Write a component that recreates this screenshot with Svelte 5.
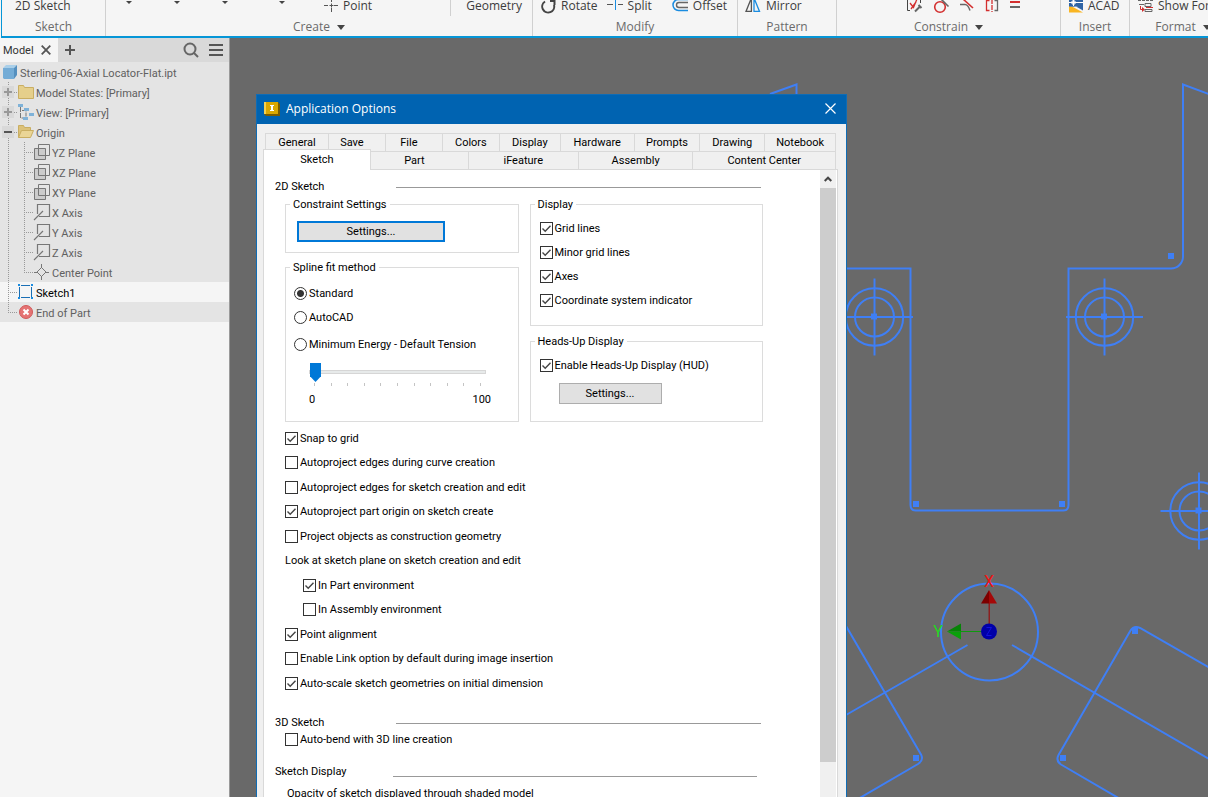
<script>
  const planes = ['YZ Plane', 'XZ Plane', 'XY Plane'];
  const axes = ['X Axis', 'Y Axis', 'Z Axis'];
  const tree = [
    { label: 'Model States: [Primary]', icon: 'folder', level: 1, expander: '+' },
    { label: 'View: [Primary]', icon: 'view', level: 1, expander: '+' },
    { label: 'Origin', icon: 'open', level: 1, expander: '-' },
    ...planes.map((label) => ({ label, icon: 'plane', level: 2 })),
    ...axes.map((label) => ({ label, icon: 'axis', level: 2 })),
    { label: 'Center Point', icon: 'point', level: 2, last: true },
    { label: 'Sketch1', icon: 'sketch', level: 1, active: true },
    { label: 'End of Part', icon: 'end', level: 1, last: true }
  ];
  const upperTabs = [
    ['General', 63], ['Save', 57, true], ['File', 57, true], ['Colors', 57], ['Display', 61],
    ['Hardware', 74], ['Prompts', 66], ['Drawing', 65], ['Notebook', 71]
  ];
  const lowerTabs = [['Part', 98, true], ['iFeature', 110], ['Assembly', 115], ['Content Center', 143]];
  const displayOptions = ['Grid lines', 'Minor grid lines', 'Axes', 'Coordinate system indicator'];
  const options = [
    { label: 'Snap to grid', on: true },
    { label: 'Autoproject edges during curve creation', on: false },
    { label: 'Autoproject edges for sketch creation and edit', on: false },
    { label: 'Autoproject part origin on sketch create', on: true },
    { label: 'Project objects as construction geometry', on: false },
    { label: 'Look at sketch plane on sketch creation and edit', heading: true },
    { label: 'In Part environment', on: true, sub: true },
    { label: 'In Assembly environment', on: false, sub: true },
    { label: 'Point alignment', on: true },
    { label: 'Enable Link option by default during image insertion', on: false },
    { label: 'Auto-scale sketch geometries on initial dimension', on: true }
  ];
  const targets = [[874.5, 317], [1104.5, 317], [1199, 511]];
  const dots = [[1171, 256], [916, 504], [1062, 504], [916, 758], [1063, 758], [1135, 631]];
  let method = $state('Standard');
  let tension = $state(0);
</script>

{#snippet check(label, on)}
  <label class="opt"><input type="checkbox" checked={on} /><span>{label}</span></label>
{/snippet}

{#snippet caret()}
  <svg class="caret" width="8" height="5" viewBox="0 0 8 5"><path d="M0 0h8L4 5z" fill="#444" /></svg>
{/snippet}

<div class="app">
  <header class="ribbon">
    <section class="group">
      <div class="tools first"><button>2D Sketch</button></div>
      <h2>Sketch</h2>
    </section>
    <section class="group">
      <div class="tools create">
        <span class="drops">
          {#each [0, 1, 2, 3] as i (i)}
            <svg width="6" height="4" viewBox="0 0 6 4"><path d="M0 1h6L3 4z" fill="#444" /></svg>
          {/each}
        </span>
        <button>
          <svg width="14" height="14" viewBox="0 0 14 14" fill="none" stroke="#555"><path d="M0 6.500h4M10 6.500h4M7.500 0v3M7.500 9v4M5.500 6.500h4M7.500 4.500v4" /></svg>
          Point
        </button>
        <button class="geometry">Geometry</button>
      </div>
      <h2>Create {@render caret()}</h2>
    </section>
    <section class="group">
      <div class="tools modify">
        <button>
          <svg width="15" height="16" viewBox="0 0 15 16" fill="none" stroke="#444" stroke-width="2"><path d="M4 3.500A6 6 0 1 0 13 7M9 3h4.500v4" /></svg>
          Rotate
        </button>
        <button>
          <svg width="16" height="16" viewBox="0 0 16 16" fill="none" stroke="#555"><path d="M0 6.500h6M11 6.500h5" /><path d="M8.500 0v12" stroke="#1a8ce0" /></svg>
          Split
        </button>
        <button class="offset">
          <svg width="16" height="16" viewBox="0 0 16 16" fill="none"><path d="M16 1.500H6.500a5.500 5.500 0 0 0 0 11H16" stroke="#1a8ce0" stroke-width="1.500" /><path d="M16 4.500H7a2.500 2.500 0 0 0 0 5h9" stroke="#666" stroke-width="1.400" /></svg>
          Offset
        </button>
      </div>
      <h2>Modify</h2>
    </section>
    <section class="group">
      <div class="tools pattern">
        <button>
          <svg width="16" height="16" viewBox="0 0 16 16" fill="none" stroke-width="1.300"><path d="M6.400 0v13.400H1z" stroke="#555" /><path d="M9 0v13.400h5.500z" stroke="#1a8ce0" /></svg>
          Mirror
        </button>
      </div>
      <h2>Pattern</h2>
    </section>
    <section class="group">
      <div class="tools constrain">
        <button aria-label="Auto dimension"><svg width="17" height="16" viewBox="0 0 17 16" fill="none" stroke="#444"><path d="M4 1.500H1.500v11H4M14.500 1v4" /><path d="M4 5l3.500 4.500L11 1M5 11l5-7" stroke="#d32f2f" stroke-width="1.300" /><path d="M9 13.500l5-5m-1.500-1.500 3 3" stroke="#666" stroke-width="2" /></svg></button>
        <button aria-label="Tangent"><svg width="17" height="16" viewBox="0 0 17 16" fill="none"><circle cx="7" cy="9" r="5.300" stroke="#d32f2f" stroke-width="1.600" /><path d="M8 1l7.500 7.500" stroke="#666" stroke-width="1.600" /></svg></button>
        <button aria-label="Smooth"><svg width="15" height="16" viewBox="0 0 15 16" fill="none"><path d="M0 6.500h5c3 0 4 3 5 6" stroke="#666" stroke-width="1.500" /><path d="M3 1l10 9" stroke="#d32f2f" stroke-width="1.600" /></svg></button>
        <button aria-label="Symmetric"><svg width="15" height="16" viewBox="0 0 15 16" fill="none"><path d="M4.500 2.500H1.500v10h3" stroke="#d32f2f" stroke-width="1.300" /><path d="M9.500 2.500h3v10h-3" stroke="#666" stroke-width="1.300" /><path d="M7 1v13" stroke="#d32f2f" stroke-width="1.300" stroke-dasharray="5 1" /></svg></button>
        <button aria-label="Equal"><svg width="10" height="16" viewBox="0 0 10 16"><path d="M0 3h10v2H0z" fill="#d32f2f" /><path d="M0 8h10v2H0z" fill="#666" /></svg></button>
      </div>
      <h2>Constrain {@render caret()}</h2>
    </section>
    <section class="group">
      <div class="tools insert">
        <button>
          <svg width="14" height="16" viewBox="0 0 14 16"><path d="M0 0h14v8L0 9z" fill="#2f64a5" /><path d="M0 8.500l4 .5 10 5.500H0z" fill="#f9b522" /><path d="M7 8.500l7 4V7z" fill="#2f64a5" /><path d="M4.500 0v8M0 4.500h14M3 3h3v3H3z" stroke="#fff" fill="none" /></svg>
          ACAD
        </button>
      </div>
      <h2>Insert</h2>
    </section>
    <section class="group">
      <div class="tools format">
        <button>
          <svg width="15" height="16" viewBox="0 0 15 16" fill="none" stroke="#666"><path d="M0 2.500h15" stroke-dasharray="3 1" /><path d="M1 6.500h5M7 5.500h6v3H7zM7 11.500h7v2H7z" /><path d="M15 9.500H8M2.500 8v3.500H5" stroke="#d32f2f" /><path d="M4 9l3 2.500L4 14z" fill="#d32f2f" stroke="none" /></svg>
          Show Format
        </button>
      </div>
      <h2>Format {@render caret()}</h2>
    </section>
  </header>

  <div class="body">
    <aside>
      <div class="panel-tabs">
        <button class="model"><span>Model</span>
          <svg width="10" height="10" viewBox="0 0 10 10" stroke="#555" stroke-width="1.800"><path d="M.7.7l8.600 8.600M9.300.7L.7 9.300" /></svg>
        </button>
        <button class="add" aria-label="Add panel"><svg width="10" height="10" viewBox="0 0 10 10" stroke="#555" stroke-width="2"><path d="M5 0v10M0 5h10" /></svg></button>
        <button aria-label="Search"><svg width="16" height="16" viewBox="0 0 16 16" fill="none" stroke="#666" stroke-width="2"><circle cx="7" cy="7" r="5.500" /><path d="M11 11l4 4" /></svg></button>
        <button aria-label="Menu"><svg width="14" height="12" viewBox="0 0 14 12" fill="#555"><path d="M0 0h14v2H0zM0 5h14v2H0zM0 10h14v2H0z" /></svg></button>
      </div>
      <ul class="tree">
        <li class="root">
          <svg width="16" height="16" viewBox="0 0 16 16"><path d="M1 4l3-3h11l-3 3z" fill="#a9cfe9" /><path d="M1 4h11v11H2l-1-1z" fill="#74acd6" /><path d="M12 4l3-3v10l-3 4z" fill="#5590bf" /></svg>
          <span>Sterling-06-Axial Locator-Flat.ipt</span>
        </li>
        {#each tree as item (item.label)}
          <li class:active={item.active}>
            <svg class="guide" width={item.level === 1 ? 17 : 33} height="20" viewBox="0 0 {item.level === 1 ? 17 : 33} 20" fill="none" stroke="#999">
              <path d={item.level === 1 && item.last ? 'M8.500 0v10' : 'M8.500 0v20'} stroke-dasharray="1 1" />
              {#if item.level === 1}
                <path d="M8 10.500h9" stroke-dasharray="1 1" />
              {:else}
                <path d="M24.500 0v{item.last ? 10 : 20}M24 10.500h9" stroke-dasharray="1 1" />
              {/if}
              {#if item.expander}
                <path d="M2 4h12v12H2z" fill="#d9d9d9" stroke="none" />
                <path d="M4 10h8" stroke={item.expander === '-' ? '#555' : '#999'} stroke-width="2" />
                {#if item.expander === '+'}<path d="M8 6v8" stroke-width="2" />{/if}
              {/if}
            </svg>
            <svg width="18" height="18" viewBox="{item.level === 1 ? 1 : 0} 0 18 18" fill="none">
              {#if item.icon === 'folder'}
                <path d="M2.500 15.500v-13h5l1 2h9v11z" fill="#e5cf8b" stroke="#c9ae62" />
              {:else if item.icon === 'open'}
                <path d="M2.500 14.500v-12h5l1 2h6v3" fill="#dcc27a" stroke="#c9ae62" />
                <path d="M2.500 14.500l3-7h12l-3 7z" fill="#ead596" stroke="#c9ae62" />
              {:else if item.icon === 'view'}
                <path d="M4.500 4v11h4M6 7.500h4v6" stroke="#777" stroke-dasharray="5 1" />
                <path d="M2 1h5v3H2zM8 5h5v3H8zM13 10h5v3h-5zM7 14h5v3H7z" fill="#7fb2d8" />
              {:else if item.icon === 'plane'}
                <path d="M1.500 5.500h11v11h-11z" fill="#ccc" stroke="#777" />
                <path d="M5.500 1.500h11v11h-11z" stroke="#777" />
              {:else if item.icon === 'axis'}
                <path d="M4.500 11V1.500h12v12H6M1 17l9-9" stroke="#777" stroke-width="1.200" />
              {:else if item.icon === 'point'}
                <path d="M8.500 4.500l4.500 4.500-4.500 4.500L4 9zM8.500 1v4M8.500 13v4M1 9.500h4M12 9.500h4" stroke="#777" />
              {:else if item.icon === 'sketch'}
                <path d="M3.500 4v10M15.500 4v10M5 2.500h9M5 14.500h9" stroke="#1a6fb5" />
                <path d="M2 1h2v2H2zM15 1h2v2h-2zM2 14h2v2H2zM15 14h2v2h-2z" fill="#1a8ce0" />
              {:else}
                <circle cx="10" cy="9" r="6.500" fill="#e57373" stroke="#d05a5a" />
                <path d="M7.500 6.500l5 5M12.500 6.500l-5 5" stroke="#fff" stroke-width="2" />
              {/if}
            </svg>
            <span>{item.label}</span>
          </li>
        {/each}
      </ul>
    </aside>

    <main>
      <svg class="canvas" viewBox="230 38 978 759" preserveAspectRatio="xMinYMin slice" fill="none" stroke="#3f7ff5" stroke-width="2">
        <path d="M770 94l26.500-9.500V268M846 268.500h64.500V505q0 5.500 5.500 5.500h147q5.500 0 5.500-5.500V268.500H1171a12 12 0 0 0 12-12V84.500l27 10" />
        <path d="M846 626l75 128.500q3 5.500-3 9.500l-60 35M1210 668l-70-40q-6-3-9.500 2.500l-72 124.500q-3 6 2.500 9.500l60 35M967.500 645L846 715M1012 645l198 114.500" />
        <circle cx="989.500" cy="632" r="48.500" />
        {#each targets as [x, y] (x)}
          <circle cx={x} cy={y} r="28.700" />
          <circle cx={x} cy={y} r="19.500" />
          <path d="M{x - 38.500} {y}h77M{x} {y - 38.500}v77" />
          <path d="M{x - 3.500} {y - 3.500}h6v6h-6z" fill="#3f7ff5" stroke="none" />
        {/each}
        {#each dots as [x, y] (x + '-' + y)}
          <path d="M{x - 3} {y - 3}h6v6h-6z" fill="#3f7ff5" stroke="none" />
        {/each}
        <g stroke="none">
          <path d="M988.500 603h1.500v22h-1.500z" fill="#8c2020" />
          <path d="M989 590l-8 13.500h8z" fill="#7d0000" /><path d="M989 590l8 13.500h-8z" fill="#a50808" />
          <path d="M960 631h22v1h-22z" fill="#0e9a0e" />
          <path d="M947 631.500l14-8v8z" fill="#078407" /><path d="M947 631.500l14 8v-8z" fill="#0aa00a" />
          <circle cx="989" cy="631.500" r="8" fill="#0000a8" />
          <path d="M986.500 627.500h5l-5 8h5" stroke="#1212e0" stroke-width="1" fill="none" />
          <text x="989" y="587" text-anchor="middle" fill="#f01414">X</text>
          <text x="938" y="637" text-anchor="middle" fill="#22d822">Y</text>
        </g>
      </svg>
    </main>
  </div>

  <div class="dialog" role="dialog" aria-labelledby="dialog-title">
    <div class="title">
      <svg width="16" height="16" viewBox="0 0 16 16"><path d="M0 1h14l2 2v12H2l-2-2z" fill="#7a5c00" /><path d="M0 1h14v12H0z" fill="#dba800" /><path d="M0 1h2v12H0z" fill="#f5d050" /><path d="M6 4h4v1H9v4h1v1H6V9h1V5H6z" fill="#fff" /></svg>
      <h1 id="dialog-title">Application Options</h1>
      <button aria-label="Close"><svg width="11" height="11" viewBox="0 0 11 11" stroke="#fff" stroke-width="1.200"><path d="M.5.5l10 10M10.500.5l-10 10" /></svg></button>
    </div>
    <div class="tabs" role="tablist">
      <div class="tab-row">
        {#each upperTabs as [name, w, early] (name)}
          <button role="tab" aria-selected="false" class:early style:flex-grow={w}>{name}</button>
        {/each}
      </div>
      <div class="tab-row">
        <button role="tab" aria-selected="true" class="selected" style:flex-grow={107}>Sketch</button>
        {#each lowerTabs as [name, w, early] (name)}
          <button role="tab" aria-selected="false" class:early style:flex-grow={w}>{name}</button>
        {/each}
      </div>
    </div>
    <div class="page">
      <div class="content">
        <div class="section"><h3>2D Sketch</h3><hr /></div>
        <div class="columns">
          <div class="column">
            <fieldset class="constraint">
              <legend>Constraint Settings</legend>
              <button class="push default">Settings...</button>
            </fieldset>
            <fieldset class="spline">
              <legend>Spline fit method</legend>
              {#each ['Standard', 'AutoCAD', 'Minimum Energy - Default Tension'] as name (name)}
                <label class="opt"><input type="radio" name="method" value={name} bind:group={method} /><span>{name}</span></label>
              {/each}
              <div class="slider">
                <input type="range" min="0" max="100" aria-label="Default tension" bind:value={tension} />
                <div class="ticks">{#each Array(11) as _, i (i)}<i></i>{/each}</div>
                <div class="scale"><span>0</span><span>100</span></div>
              </div>
            </fieldset>
          </div>
          <div class="column">
            <fieldset class="display">
              <legend>Display</legend>
              {#each displayOptions as name (name)}
                {@render check(name, true)}
              {/each}
            </fieldset>
            <fieldset class="hud">
              <legend>Heads-Up Display</legend>
              {@render check('Enable Heads-Up Display (HUD)', true)}
              <button class="push">Settings...</button>
            </fieldset>
          </div>
        </div>
        <div class="list">
          {#each options as o (o.label)}
            <div class="row" class:sub={o.sub}>
              {#if o.heading}<p>{o.label}</p>{:else}{@render check(o.label, o.on)}{/if}
            </div>
          {/each}
        </div>
        <div class="section"><h3>3D Sketch</h3><hr /></div>
        <div class="bend">{@render check('Auto-bend with 3D line creation', false)}</div>
        <div class="section low"><h3>Sketch Display</h3><hr /></div>
        <p class="opacity">Opacity of sketch displayed through shaded model</p>
      </div>
      <div class="scrollbar">
        <button aria-label="Scroll up"><svg width="8" height="6" viewBox="0 0 8 6" fill="none" stroke="#444" stroke-width="2"><path d="M.7 5L4 1.700 7.300 5" /></svg></button>
        <div class="thumb"></div>
      </div>
    </div>
  </div>
</div>

<style>
  :global(body) { margin: 0; overflow: hidden; }
  .app {
    position: relative; display: flex; flex-direction: column; height: 100vh; overflow: hidden;
    font: 11px/14px Roboto, "Liberation Sans", sans-serif; color: #000; background: #f5f5f5;
  }
  .app * { box-sizing: border-box; }
  h1, h2, h3, p, ul { margin: 0; padding: 0; font: inherit; }
  button { font: inherit; color: inherit; background: none; border: 0; padding: 0; margin: 0; }
  svg { flex: none; }

  .ribbon {
    display: grid; grid-template-columns: 104fr 427fr 205fr 99fr 224fr 69fr 78fr;
    border-bottom: 2px solid #0696d7; border-left: 1px solid #0696d7; margin-left: 1px;
    font: 12px/16px "Open Sans", "Noto Sans", sans-serif; color: #3c3c3c; background: #f5f5f5;
  }
  .group { display: flex; flex-direction: column; min-width: 0; height: 36px; border-right: 1px solid #d0d0d0; }
  .group:last-child { border: 0; }
  .group h2 { display: flex; align-items: center; justify-content: center; gap: 7px; line-height: 18px; color: #6a6a6a; }
  .group:last-child h2 { padding-left: 28px; white-space: nowrap; }
  .tools { display: flex; align-items: start; height: 16px; margin-bottom: 2px; }
  .tools button { display: flex; align-items: center; gap: 5px; height: 12px; line-height: 12px; white-space: nowrap; }
  .first { padding-left: 13px; }
  .create { padding-left: 20px; gap: 39px; }
  .drops { display: flex; align-items: start; gap: 42px; height: 12px; }
  .drops svg:last-child { margin-left: 9px; }
  .tools .geometry { margin-left: auto; padding: 0 10px 0 15px; height: 16px; padding-bottom: 4px; border-left: 1px solid #d0d0d0; }
  .modify { padding: 0 10px 0 8px; gap: 9px; }
  .offset { margin-left: auto; }
  .pattern { padding-left: 7px; }
  .constrain { padding-left: 69px; gap: 10px; }
  .insert { padding-left: 8px; }
  .format { padding-left: 8px; }

  .body { display: flex; flex: 1; min-height: 0; }
  aside { width: 230px; flex: none; background: #f5f5f5; border-right: 1px solid #9a9a9a; }
  .panel-tabs { display: flex; align-items: center; height: 24px; padding-right: 6px; gap: 10px; background: #d9d9d9; }
  .panel-tabs button { display: flex; align-items: center; }
  .panel-tabs .model { height: 24px; width: 58px; gap: 7px; padding-left: 3px; background: #f5f5f5; color: #333; margin-right: -3px; }
  .model span { padding-top: 2px; }
  .panel-tabs .add { margin-right: auto; }
  .tree { list-style: none; background: #e4e4e4; color: #606060; }
  .tree li { display: flex; align-items: center; height: 20px; white-space: nowrap; }
  .tree li span { padding: 3px 0 0 1px; }
  .tree .root { padding-left: 2px; gap: 1px; }
  .tree .active { background: #f5f5f5; color: #000; }

  main { position: relative; flex: 1; min-width: 0; background: #696969; }
  .canvas { position: absolute; inset: 0; width: 100%; height: 100%; }
  .canvas text { font: 16px Roboto, sans-serif; }

  .dialog {
    position: absolute; left: 256px; top: 94px; width: 591px; bottom: 0; display: flex; flex-direction: column;
    border: 1px solid #0f6cb5; border-bottom: 0; background: #f0f0f0;
  }
  .title { display: flex; align-items: center; gap: 6px; height: 29px; flex: none; padding: 0 10px 2px 7px; background: #0063b1; color: #fff; }
  .title h1 { flex: 1; font: 12px/16px "Open Sans", "Noto Sans", sans-serif; }
  .title button { display: flex; }
  .tabs { padding: 9px 10px 0 8px; }
  .tab-row { display: flex; height: 18px; border: 1px solid #d9d9d9; border-width: 1px 0 0 1px; }
  .tab-row button { flex: 1 1 0; border-right: 1px solid #d9d9d9; line-height: 18px; }
  .tab-row .early { text-indent: -10px; }
  .tab-row .selected {
    position: relative; height: 21px; margin: -3px 0 0 -3px; background: #fff; border: 1px solid #d9d9d9; border-bottom: 0; line-height: 18px; z-index: 1;
  }
  .page { display: flex; flex: 1; min-height: 0; margin: 0 8px 0 6px; border: 1px solid #d9d9d9; border-bottom: 0; background: #fff; }
  .content { flex: 1; min-width: 0; overflow: hidden; padding: 8px 59px 0 11px; }
  .section { display: flex; align-items: center; height: 16px; }
  .section h3 { width: 121px; padding-top: 1px; }
  hr { flex: 1; height: 1px; margin: 2px 0 0; border: 0; background: #999; }
  .low h3 { width: 118px; }
  .low hr { margin: 10px 4px 0 0; }
  .columns { display: grid; grid-template-columns: 1fr 1fr; gap: 11px; padding: 3px 0 0 10px; margin-right: -2px; }
  .column { display: flex; flex-direction: column; gap: 7px; }
  fieldset { min-width: 0; margin: 0; padding: 0 10px; border: 1px solid #dcdcdc; }
  legend { padding: 0 3px; margin-left: -6px; line-height: 15px; }
  .constraint { height: 56px; }
  .spline { height: 162px; padding: 0 8px; }
  .spline legend { margin-left: -4px; }
  .display { height: 129px; margin-bottom: 1px; padding: 0 9px; }
  .display legend, .hud legend { margin-left: -5px; }
  .hud { flex: 1; padding: 0 9px; }
  .push { display: block; width: 103px; height: 21px; border: 1px solid #adadad; background: #e1e1e1; margin: 5px 0 0 19px; }
  .push.default { width: 148px; margin: 9px 0 0 1px; border: 2px solid #0078d7; }
  .opt { display: flex; align-items: center; gap: 2px; height: 24px; padding-bottom: 2px; white-space: nowrap; }
  .opt span { padding-top: 2px; }
  .display legend + .opt { margin-top: 5px; }
  .hud legend + .opt { margin-top: 5px; }
  .spline legend + .opt { margin-top: 7px; }
  .spline .opt:nth-of-type(3) { margin-top: 3px; }
  .opt input { appearance: none; flex: none; width: 13px; height: 13px; margin: 0; border: 1px solid #333; background: #fff; }
  .opt input[type='checkbox']:checked {
    background: url("data:image/svg+xml,%3Csvg xmlns='http://www.w3.org/2000/svg' width='11' height='11'%3E%3Cpath d='M1.500 5.500l2.700 2.700L9.500 2.700' fill='none' stroke='%23444' stroke-width='1.400'/%3E%3C/svg%3E");
  }
  .opt input[type='radio'] { border-radius: 50%; }
  .opt input[type='radio']:checked { background: radial-gradient(circle, #333 0 3px, #fff 4px); }
  .slider { width: 177px; margin: 5px 0 0 15px; }
  .slider input { display: block; appearance: none; width: 100%; height: 20px; margin: 0; background: none; }
  .slider input::-webkit-slider-runnable-track { height: 4px; background: #e7eaea; border: 1px solid #d6d6d6; }
  .slider input::-webkit-slider-thumb {
    appearance: none; width: 11px; height: 19px; margin-top: -8px; background: #0078d7;
    clip-path: polygon(0 0, 100% 0, 100% 70%, 50% 100%, 0 70%);
  }
  .ticks { display: flex; justify-content: space-between; padding: 1px 5px 0; }
  .ticks i { width: 1px; height: 3px; background: #c4c4c4; }
  .scale { display: flex; justify-content: space-between; margin: 7px -5px 0 0; }
  .list { padding: 5px 0 18px 10px; }
  .row { height: 24px; }
  .row:nth-child(even) { height: 25px; }
  .row p { line-height: 24px; }
  .sub { padding-left: 18px; }
  .bend { margin: -2px 0 11px 10px; }
  .opacity { padding: 8px 0 0 12px; }
  .scrollbar { width: 17px; flex: none; display: flex; flex-direction: column; background: #f0f0f0; border-right: 1px solid #fff; }
  .scrollbar button { height: 18px; }
  .thumb { margin-bottom: 35px; background: #cdcdcd; flex: 1; }
</style>
